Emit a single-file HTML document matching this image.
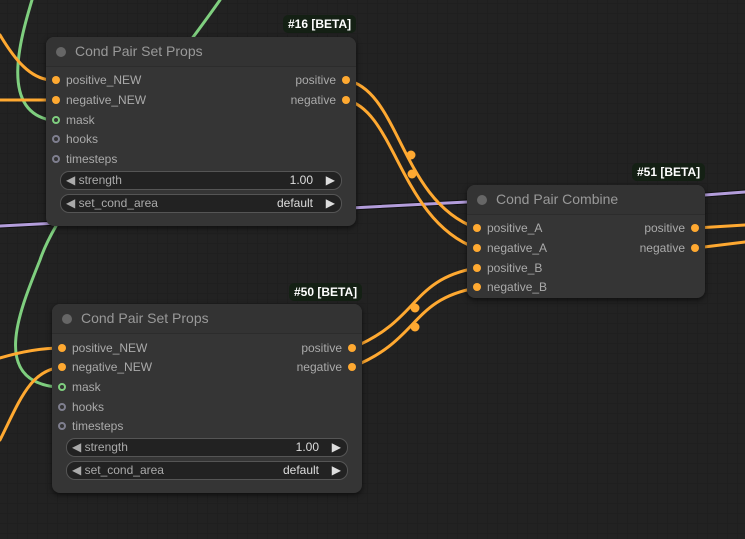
<!DOCTYPE html>
<html><head><style>
body{margin:0;width:745px;height:539px;overflow:hidden;background:#222;font-family:"Liberation Sans",Arial,sans-serif;position:relative;
background-image:linear-gradient(#1f1f1f 1px,transparent 1px),linear-gradient(90deg,#1f1f1f 1px,transparent 1px),linear-gradient(#1a1a1a 1px,transparent 1px),linear-gradient(90deg,#1a1a1a 1px,transparent 1px);
background-size:10px 10px,10px 10px,100px 100px,100px 100px;background-position:7px 3px,7px 3px,47px 43px,47px 43px}
svg{position:absolute;left:0;top:0}
.node{position:absolute;background:#353535;border-radius:8px;box-shadow:0 2px 6px rgba(0,0,0,.6)}
.title{height:29px;border-bottom:1px solid #2c2c2c;color:#999;font-size:14px;line-height:29px;padding-left:29px;position:relative;background:#333;border-radius:8px 8px 0 0}
.title:before{content:"";position:absolute;left:10px;top:10px;width:10px;height:10px;border-radius:50%;background:#666}
.row{position:absolute;font-size:12px;color:#aaa;height:14px;line-height:14px}
.dot{position:absolute;width:8px;height:8px;border-radius:50%;background:#ffa931;top:3px}
.ring{position:absolute;width:4px;height:4px;border-radius:50%;border:2px solid #7f7f8f;top:3px}
.w{position:absolute;height:17px;border:1px solid #555;border-radius:9px;background:#222;font-size:12px;color:#aaa;line-height:17px}
.w b{position:absolute;font-weight:normal;color:#ddd}
.badge{position:absolute;background:#142014;color:#fff;font-size:12px;font-weight:bold;height:18px;line-height:18px;padding:0 5px;border-radius:5px}
</style></head><body>
<svg width="745" height="539">
<g fill="none" stroke-linecap="round">
<g stroke="#000" stroke-width="5" opacity=".5">
<path d="M0 226 L467 202"/><path d="M705 195 L745 192"/>
</g>
<path d="M0 226 L467 202" stroke="#b39ddb" stroke-width="3"/>
<path d="M705 195 L745 192" stroke="#b39ddb" stroke-width="3"/>
<g stroke="#7fcf7f" stroke-width="3">
<path d="M32 0 C20 40 0 110 50 120"/>
<path d="M220 0 C150 100 60 200 40 260 C20 310 -10 380 56 387"/>
</g>
<g stroke="#ffa931" stroke-width="3">
<path d="M0 35 C15 60 30 78 50 80"/>
<path d="M0 100 L50 100"/>
<path d="M346 80 C400 90 400 200 476 228"/>
<path d="M346 100 C395 110 400 220 476 248"/>
<path d="M352 348 C420 320 410 280 476 268"/>
<path d="M352 367 C420 340 410 300 476 288"/>
<path d="M0 358 C20 352 40 348 62 348"/>
<path d="M0 440 C20 400 30 370 62 367"/>
<path d="M696 228 L745 225"/>
<path d="M696 248 L745 242"/>
</g>
<g fill="#ffa931"><circle cx="411" cy="155" r="4.5"/><circle cx="412" cy="174" r="4.5"/><circle cx="415" cy="308" r="4.5"/><circle cx="415" cy="327" r="4.5"/></g>
</g></svg>

<div class="badge" style="left:283px;top:15px">#16 [BETA]</div>
<div class="node" style="left:46px;top:37px;width:310px;height:189px">
<div class="title">Cond Pair Set Props</div>
<div class="row" style="left:6px;top:36px"><span class="dot" style="left:0"></span><span style="margin-left:14px">positive_NEW</span></div>
<div class="row" style="left:6px;top:56px"><span class="dot" style="left:0"></span><span style="margin-left:14px">negative_NEW</span></div>
<div class="row" style="left:6px;top:76px"><span class="ring" style="left:0;border-color:#7fcf7f"></span><span style="margin-left:14px">mask</span></div>
<div class="row" style="left:6px;top:95px"><span class="ring" style="left:0"></span><span style="margin-left:14px">hooks</span></div>
<div class="row" style="left:6px;top:115px"><span class="ring" style="left:0"></span><span style="margin-left:14px">timesteps</span></div>
<div class="row" style="right:6px;top:36px"><span style="margin-right:14px">positive</span><span class="dot" style="right:0"></span></div>
<div class="row" style="right:6px;top:56px"><span style="margin-right:14px">negative</span><span class="dot" style="right:0"></span></div>
<div class="w" style="left:14px;top:134px;width:280px"><span style="position:absolute;left:5px">◀ strength</span><b style="right:28px">1.00</b><b style="right:6px">▶</b></div>
<div class="w" style="left:14px;top:157px;width:280px"><span style="position:absolute;left:5px">◀ set_cond_area</span><b style="right:28px">default</b><b style="right:6px">▶</b></div>
</div>

<div class="badge" style="left:289px;top:283px">#50 [BETA]</div>
<div class="node" style="left:52px;top:304px;width:310px;height:189px">
<div class="title">Cond Pair Set Props</div>
<div class="row" style="left:6px;top:37px"><span class="dot" style="left:0"></span><span style="margin-left:14px">positive_NEW</span></div>
<div class="row" style="left:6px;top:56px"><span class="dot" style="left:0"></span><span style="margin-left:14px">negative_NEW</span></div>
<div class="row" style="left:6px;top:76px"><span class="ring" style="left:0;border-color:#7fcf7f"></span><span style="margin-left:14px">mask</span></div>
<div class="row" style="left:6px;top:96px"><span class="ring" style="left:0"></span><span style="margin-left:14px">hooks</span></div>
<div class="row" style="left:6px;top:115px"><span class="ring" style="left:0"></span><span style="margin-left:14px">timesteps</span></div>
<div class="row" style="right:6px;top:37px"><span style="margin-right:14px">positive</span><span class="dot" style="right:0"></span></div>
<div class="row" style="right:6px;top:56px"><span style="margin-right:14px">negative</span><span class="dot" style="right:0"></span></div>
<div class="w" style="left:14px;top:134px;width:280px"><span style="position:absolute;left:5px">◀ strength</span><b style="right:28px">1.00</b><b style="right:6px">▶</b></div>
<div class="w" style="left:14px;top:157px;width:280px"><span style="position:absolute;left:5px">◀ set_cond_area</span><b style="right:28px">default</b><b style="right:6px">▶</b></div>
</div>

<div class="badge" style="left:632px;top:163px">#51 [BETA]</div>
<div class="node" style="left:467px;top:185px;width:238px;height:113px">
<div class="title">Cond Pair Combine</div>
<div class="row" style="left:6px;top:36px"><span class="dot" style="left:0"></span><span style="margin-left:14px">positive_A</span></div>
<div class="row" style="left:6px;top:56px"><span class="dot" style="left:0"></span><span style="margin-left:14px">negative_A</span></div>
<div class="row" style="left:6px;top:76px"><span class="dot" style="left:0"></span><span style="margin-left:14px">positive_B</span></div>
<div class="row" style="left:6px;top:95px"><span class="dot" style="left:0"></span><span style="margin-left:14px">negative_B</span></div>
<div class="row" style="right:6px;top:36px"><span style="margin-right:14px">positive</span><span class="dot" style="right:0"></span></div>
<div class="row" style="right:6px;top:56px"><span style="margin-right:14px">negative</span><span class="dot" style="right:0"></span></div>
</div>
</body></html>
